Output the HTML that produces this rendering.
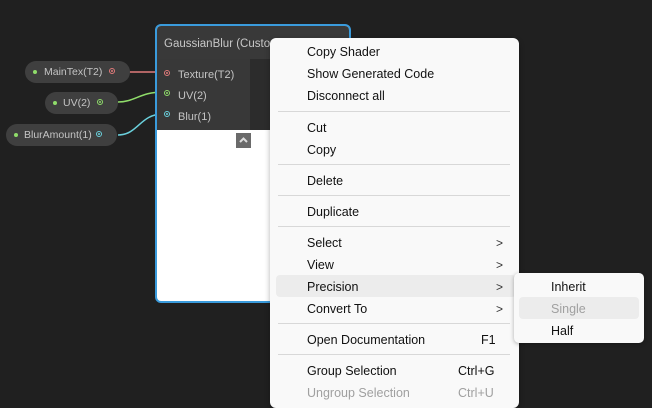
<!DOCTYPE html><html><head><style>
body{margin:0;width:652px;height:401px;background:#202020;position:relative;overflow:hidden;font-family:"Liberation Sans",sans-serif}
.a{position:absolute}
.pill{position:absolute;background:#3f3f3f;border-radius:11px;height:22px;color:#c4c4c4;font-size:10.5px;line-height:22px}
.dot{position:absolute;width:4px;height:4px;border-radius:2px;background:#8fdc6a;top:9px}
.port{position:absolute;width:4px;height:4px;border-radius:5px;border:1.5px solid;box-sizing:content-box}
.port::after{content:"";position:absolute;left:1px;top:1px;width:2px;height:2px;border-radius:1px;background:currentColor}
.m{position:absolute;left:307px;font-size:12.5px;color:#111;line-height:22px;margin-top:1px}
.k{position:absolute;font-size:12.5px;color:#111;line-height:22px;margin-top:1px}
.sep{position:absolute;left:278px;width:232px;height:1px;background:#d8d8d8}
.ar{position:absolute;left:496px;font-size:12px;color:#333;line-height:22px;margin-top:1px}
</style></head><body>
<svg class="a" style="left:0;top:0" width="200" height="160">
<path d="M118 72 H163" stroke="#e07a7a" stroke-width="1.5" fill="none"/>
<path d="M118 102 C135 102 140 92 163 92" stroke="#8fdc6a" stroke-width="1.5" fill="none"/>
<path d="M118 135 C138 135 140 114 163 114" stroke="#6ad0dc" stroke-width="1.5" fill="none"/>
</svg>
<div class="pill" style="left:25px;top:61px;width:105px"><div class="dot" style="left:8px"></div><span style="position:absolute;left:19px">MainTex(T2)</span><div class="port" style="left:84px;top:7px;border-color:#e07a7a;color:#e07a7a"></div></div>
<div class="pill" style="left:45px;top:92px;width:73px"><div class="dot" style="left:8px"></div><span style="position:absolute;left:18px">UV(2)</span><div class="port" style="left:52px;top:7px;border-color:#8fdc6a;color:#8fdc6a"></div></div>
<div class="pill" style="left:6px;top:124px;width:111px"><div class="dot" style="left:8px"></div><span style="position:absolute;left:18px">BlurAmount(1)</span><div class="port" style="left:90px;top:7px;border-color:#6ad0dc;color:#6ad0dc"></div></div>
<div class="a" style="left:155px;top:24px;width:192px;height:275px;border:2px solid #3a9bdc;border-radius:6px;background:#fff;overflow:hidden">
<div class="a" style="left:0;top:0;width:192px;height:33px;background:#393939;color:#c8c8c8;font-size:11.5px;line-height:36px;padding-left:7px;box-sizing:border-box">GaussianBlur (Custom Function)</div>
<div class="a" style="left:0;top:33px;width:192px;height:71px;background:#2c2c2c"></div>
<div class="a" style="left:0;top:33px;width:93px;height:71px;background:#383838;color:#c4c4c4;font-size:11px">
<div class="port" style="left:7px;top:11px;border-color:#e07a7a;color:#e07a7a"></div><span class="a" style="left:21px;top:10px">Texture(T2)</span>
<div class="port" style="left:7px;top:31px;border-color:#8fdc6a;color:#8fdc6a"></div><span class="a" style="left:21px;top:31px">UV(2)</span>
<div class="port" style="left:7px;top:52px;border-color:#6ad0dc;color:#6ad0dc"></div><span class="a" style="left:21px;top:52px">Blur(1)</span>
</div>
<div class="a" style="left:79px;top:107px;width:15px;height:15px;background:#6a6a6a"><svg width="15" height="15"><path d="M4 9 L7.5 5.5 L11 9" stroke="#ddd" stroke-width="2" fill="none"/></svg></div>
</div>
<div class="a" style="left:270px;top:38px;width:249px;height:370px;background:#f9f9f9;border-radius:6px;box-shadow:0 2px 6px rgba(0,0,0,.3)"></div>
<div class="a" style="left:276px;top:275px;width:240px;height:22px;background:#ececec;border-radius:4px"></div>
<div class="m" style="top:40px">Copy Shader</div>
<div class="m" style="top:62px">Show Generated Code</div>
<div class="m" style="top:84px">Disconnect all</div>
<div class="sep" style="top:111px"></div>
<div class="m" style="top:116px">Cut</div>
<div class="m" style="top:138px">Copy</div>
<div class="sep" style="top:164px"></div>
<div class="m" style="top:169px">Delete</div>
<div class="sep" style="top:195px"></div>
<div class="m" style="top:200px">Duplicate</div>
<div class="sep" style="top:226px"></div>
<div class="m" style="top:231px">Select</div><div class="ar" style="top:231px">&gt;</div>
<div class="m" style="top:253px">View</div><div class="ar" style="top:253px">&gt;</div>
<div class="m" style="top:275px">Precision</div><div class="ar" style="top:275px">&gt;</div>
<div class="m" style="top:297px">Convert To</div><div class="ar" style="top:297px">&gt;</div>
<div class="sep" style="top:323px"></div>
<div class="m" style="top:328px">Open Documentation</div><div class="k" style="left:481px;top:328px">F1</div>
<div class="sep" style="top:354px"></div>
<div class="m" style="top:359px">Group Selection</div><div class="k" style="left:458px;top:359px">Ctrl+G</div>
<div class="m" style="top:381px;color:#a0a0a0">Ungroup Selection</div><div class="k" style="left:458px;top:381px;color:#a0a0a0">Ctrl+U</div>
<div class="a" style="left:514px;top:273px;width:130px;height:70px;background:#f9f9f9;border-radius:5px;box-shadow:0 1px 4px rgba(0,0,0,.3)"></div>
<div class="a" style="left:519px;top:297px;width:120px;height:22px;background:#ececec;border-radius:4px"></div>
<div class="k" style="left:551px;top:275px">Inherit</div>
<div class="k" style="left:551px;top:297px;color:#a0a0a0">Single</div>
<div class="k" style="left:551px;top:319px">Half</div>
</body></html>
